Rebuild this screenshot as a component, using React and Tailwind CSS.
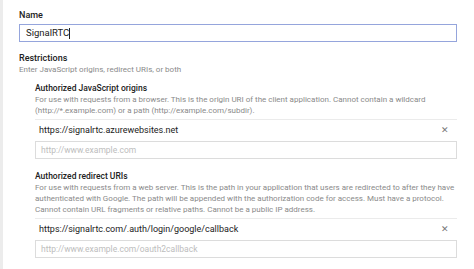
export default function App() {
  return (
    <div className="w-[474px] h-[269px] bg-white flex overflow-hidden font-['Roboto',sans-serif]">
      <div className="w-[3px] bg-[#ececec]" />
      <div className="flex-1 pl-[16px] pr-[17px] pt-[9px]">
        <div className="text-[9px] leading-[12px] font-medium text-[#212121]">Name</div>
        <div className="mt-[3px] h-[18px] border border-[#95a5dc] flex items-center px-[6px] text-[9.5px] text-[#212121]">
          SignalRTC<span className="w-px h-[11px] bg-[#212121]" />
        </div>

        <div className="mt-[10px] text-[9px] leading-[12px] font-medium text-[#212121]">Restrictions</div>
        <div className="text-[8px] leading-[12px] text-[#8a8a8a]">Enter JavaScript origins, redirect URIs, or both</div>

        <div className="pl-[16px]">
          <div className="mt-[6px] text-[8.5px] leading-[12px] font-medium text-[#212121]">Authorized JavaScript origins</div>
          <div className="text-[8px] leading-[11px] text-[#8a8a8a] whitespace-nowrap">
            For use with requests from a browser. This is the origin URI of the client application. Cannot contain a wildcard
            <br />
            (http://*.example.com) or a path (http://example.com/subdir).
          </div>
          <div className="mt-[3px] border-t border-[#ebebeb] h-[22px] flex items-center justify-between pl-[4px] pr-[8px]">
            <span className="text-[9px] text-[#212121]">https://signalrtc.azurewebsites.net</span>
            <span className="text-[9px] text-[#777]">✕</span>
          </div>
          <div className="h-[18px] border border-[#dcdcdc] flex items-center px-[5px] text-[8.5px] text-[#bdbdbd]">
            http://www.example.com
          </div>

          <div className="mt-[11px] text-[8.5px] leading-[12px] font-medium text-[#212121]">Authorized redirect URIs</div>
          <div className="text-[8px] leading-[11px] text-[#8a8a8a] whitespace-nowrap">
            For use with requests from a web server. This is the path in your application that users are redirected to after they have
            <br />
            authenticated with Google. The path will be appended with the authorization code for access. Must have a protocol.
            <br />
            Cannot contain URL fragments or relative paths. Cannot be a public IP address.
          </div>
          <div className="mt-[3px] border-t border-[#ebebeb] h-[22px] flex items-center justify-between pl-[4px] pr-[8px]">
            <span className="text-[9px] text-[#212121]">https://signalrtc.com/.auth/login/google/callback</span>
            <span className="text-[9px] text-[#777]">✕</span>
          </div>
          <div className="h-[18px] border border-[#dcdcdc] flex items-center px-[5px] text-[8.5px] text-[#bdbdbd]">
            http://www.example.com/oauth2callback
          </div>
        </div>
      </div>
    </div>
  );
}
